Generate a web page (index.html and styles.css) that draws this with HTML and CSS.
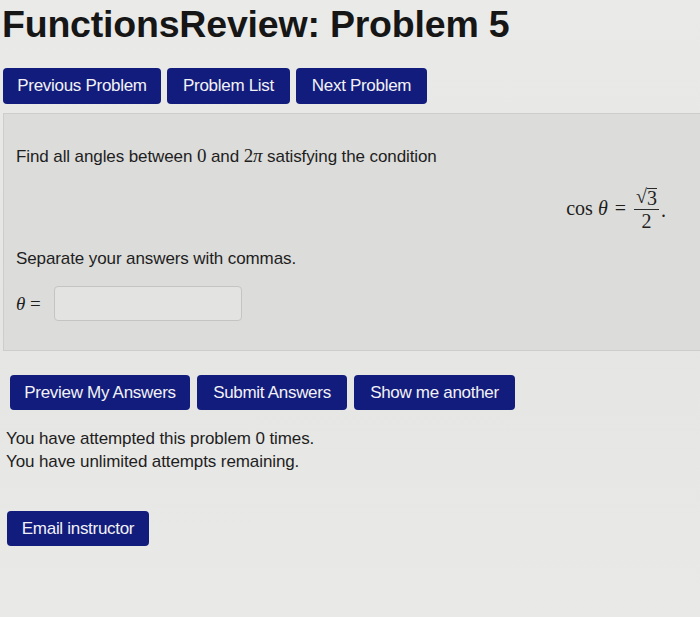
FILE: index.html
```html
<!DOCTYPE html>
<html>
<head>
<meta charset="utf-8">
<link rel="stylesheet" href="styles.css">
</head>
<body>
<h1 class="title">FunctionsReview: Problem 5</h1>
<div class="nav">
  <span class="btn btn-prev">Previous Problem</span>
  <span class="btn btn-list">Problem List</span>
  <span class="btn btn-next">Next Problem</span>
</div>
<div class="panel">
  <p class="prob">Find all angles between <span class="m">0</span> and <span class="m">2<i>π</i></span> satisfying the condition</p>
  <div class="display">
    <span class="mrow"><span class="fn">cos</span><i>θ</i><span class="eq">=</span><span class="frac"><span class="num"><span class="rad">√</span><span class="radic">3</span></span><span class="den">2</span></span><span class="dot">.</span></span>
  </div>
  <p class="sep">Separate your answers with commas.</p>
  <div class="answer">
    <span class="m"><i>θ</i> =</span>
    <span class="input"></span>
  </div>
</div>
<div class="actions">
  <span class="btn btn-preview">Preview My Answers</span>
  <span class="btn btn-submit">Submit Answers</span>
  <span class="btn btn-another">Show me another</span>
</div>
<p class="attempts">You have attempted this problem 0 times.<br>You have unlimited attempts remaining.</p>
<div class="email">
  <span class="btn btn-email">Email instructor</span>
</div>
</body>
</html>
```
FILE: styles.css
```css
html {
  margin: 0;
  padding: 0;
  height: 617px;
  background: #e7e7e5;
}
body {
  margin: 0;
  padding: 0;
  width: 700px;
  height: 617px;
  overflow: hidden;
  background: linear-gradient(180deg, #eaeae8 0%, #e5e5e3 50%, #e9e9e7 100%);
  font-family: "Liberation Sans", Arial, sans-serif;
  color: #1e1e1e;
}
.title {
  margin: 0;
  padding: 3px 0 0 2px;
  font-size: 37.5px;
  line-height: 43px;
  font-weight: bold;
  color: #161616;
  letter-spacing: -0.2px;
}
.nav {
  display: flex;
  gap: 6px;
  padding: 22px 0 0 3px;
}
.btn {
  display: inline-flex;
  align-items: center;
  justify-content: center;
  background: #121c7c;
  color: #f2f2f6;
  border-radius: 4px;
  font-size: 17px;
  height: 36px;
  box-sizing: border-box;
  letter-spacing: -0.3px;
}
.btn-prev { width: 158px; }
.btn-list { width: 123px; }
.btn-next { width: 131px; }
.panel {
  margin: 9px 0 0 3px;
  height: 238px;
  background: #dcdcda;
  border: 1px solid #cdcdcb;
  border-right: none;
  box-sizing: border-box;
  padding: 31px 0 0 12px;
  font-size: 17px;
}
.prob {
  margin: 0;
  line-height: 22px;
  letter-spacing: -0.1px;
}
.m {
  font-family: "Liberation Serif", "Times New Roman", serif;
  font-size: 19px;
}
.display {
  display: flex;
  justify-content: flex-end;
  padding: 14px 34px 0 0;
  height: 53px;
  font-family: "Liberation Serif", "Times New Roman", serif;
  font-size: 20px;
}
.mrow {
  display: flex;
  align-items: center;
}
.fn {
  margin-right: 5px;
}
.eq {
  margin: 0 8px 0 7px;
}
.frac {
  display: inline-flex;
  flex-direction: column;
  align-items: center;
  line-height: 21px;
}
.num {
  border-bottom: 1px solid #2a2a2a;
  padding: 0 2px 1px;
  display: flex;
}
.radic {
  border-top: 1px solid #2a2a2a;
  line-height: 19px;
  margin-top: 2px;
}
.den {
  padding-top: 1px;
}
.dot {
  margin-left: 2px;
  align-self: center;
  padding-top: 4px;
}
.sep {
  margin: 13px 0 0 0;
  line-height: 22px;
  letter-spacing: -0.1px;
}
.answer {
  display: flex;
  align-items: center;
  gap: 13px;
  margin-top: 16px;
}
.input {
  width: 188px;
  height: 35px;
  box-sizing: border-box;
  background: #e3e3e1;
  border: 1px solid #c4c4c2;
  border-radius: 4px;
}
.actions {
  display: flex;
  gap: 7px;
  padding: 24px 0 0 10px;
}
.btn-preview { width: 180px; height: 35px; }
.btn-submit { width: 150px; height: 35px; }
.btn-another { width: 161px; height: 35px; }
.attempts {
  margin: 17px 0 0 6px;
  font-size: 17px;
  line-height: 23px;
  letter-spacing: -0.1px;
}
.email {
  padding: 38px 0 0 7px;
}
.btn-email { width: 142px; height: 35px; }
```
